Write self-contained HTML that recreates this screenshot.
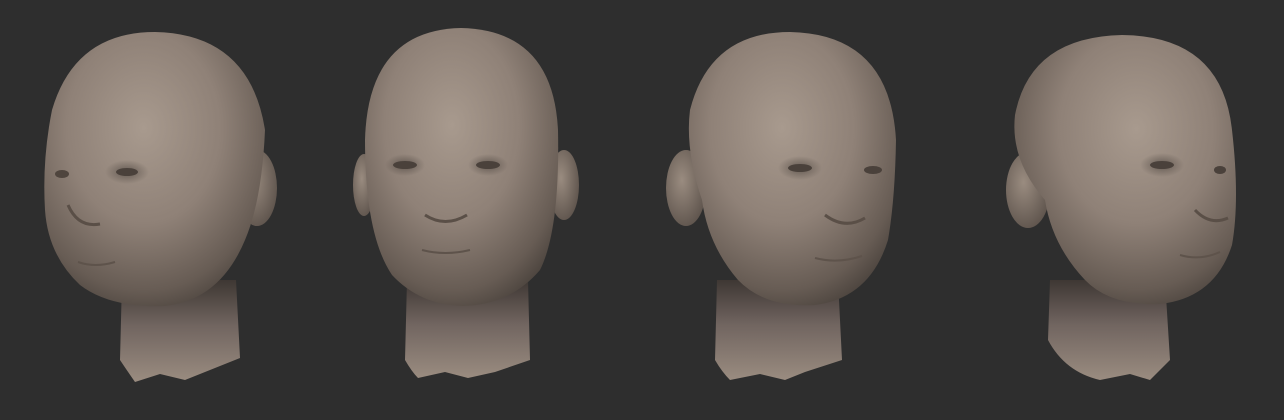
<!DOCTYPE html>
<html><head><meta charset="utf-8"><style>
html,body{margin:0;padding:0;background:#2e2e2e;width:1284px;height:420px;overflow:hidden}
svg{display:block}
</style></head><body>
<svg width="1284" height="420" viewBox="0 0 1284 420" xmlns="http://www.w3.org/2000/svg">
<defs>
<radialGradient id="h1" cx="0.45" cy="0.35" r="0.7">
<stop offset="0" stop-color="#a89a8e"/><stop offset="0.5" stop-color="#8f8177"/><stop offset="0.85" stop-color="#675c54"/><stop offset="1" stop-color="#4c443e"/>
</radialGradient>
<radialGradient id="h4" cx="0.55" cy="0.35" r="0.7">
<stop offset="0" stop-color="#a89a8e"/><stop offset="0.5" stop-color="#8f8177"/><stop offset="0.85" stop-color="#675c54"/><stop offset="1" stop-color="#4c443e"/>
</radialGradient>
<linearGradient id="nk" x1="0" y1="0" x2="0" y2="1">
<stop offset="0" stop-color="#3e3733"/><stop offset="0.45" stop-color="#716560"/><stop offset="1" stop-color="#9a8c80"/>
</linearGradient>
<radialGradient id="er" cx="0.4" cy="0.4" r="0.7">
<stop offset="0" stop-color="#9a8c80"/><stop offset="1" stop-color="#5a5049"/>
</radialGradient>
<radialGradient id="sh" cx="0.5" cy="0.5" r="0.5">
<stop offset="0" stop-color="#3f3833" stop-opacity="0.6"/><stop offset="1" stop-color="#3f3833" stop-opacity="0"/>
</radialGradient>
</defs>

<!-- Head 1 -->
<path d="M122 280 L120 360 Q128 372 135 382 L160 374 L185 380 L205 372 L240 358 L236 280 Z" fill="url(#nk)"/>
<ellipse cx="257" cy="188" rx="20" ry="38" fill="url(#er)"/>
<path d="M155 32 Q250 34 265 130 Q262 200 245 240 Q220 300 165 306 Q110 308 80 285 Q48 255 45 210 Q42 160 52 110 Q75 32 155 32 Z" fill="url(#h1)"/>
<ellipse cx="127" cy="172" rx="22" ry="12" fill="url(#sh)"/>
<ellipse cx="127" cy="172" rx="11" ry="4" fill="#4a413b"/>
<ellipse cx="62" cy="174" rx="7" ry="4" fill="#4f453e"/>
<path d="M68 205 Q78 228 100 224" stroke="#5a4f47" stroke-width="3" fill="none"/>
<path d="M78 262 Q95 268 115 262" stroke="#5e534b" stroke-width="2" fill="none"/>

<!-- Head 2 -->
<path d="M407 280 L405 360 Q412 372 418 378 L445 372 L468 378 L495 372 L530 360 L528 280 Z" fill="url(#nk)"/>
<ellipse cx="364" cy="185" rx="11" ry="31" fill="url(#er)"/>
<ellipse cx="564" cy="185" rx="15" ry="35" fill="url(#er)"/>
<path d="M461 28 Q553 30 558 130 Q560 230 540 270 Q510 305 463 306 Q420 305 392 275 Q365 235 365 140 Q368 30 461 28 Z" fill="url(#h1)"/>
<ellipse cx="405" cy="165" rx="20" ry="11" fill="url(#sh)"/>
<ellipse cx="488" cy="165" rx="20" ry="11" fill="url(#sh)"/>
<ellipse cx="405" cy="165" rx="12" ry="4" fill="#4a413b"/>
<ellipse cx="488" cy="165" rx="12" ry="4" fill="#4a413b"/>
<path d="M425 215 Q445 228 467 215" stroke="#5a4f47" stroke-width="3" fill="none"/>
<path d="M422 250 Q445 256 470 250" stroke="#5e534b" stroke-width="2" fill="none"/>

<!-- Head 3 -->
<path d="M717 280 L715 360 Q722 372 730 380 L760 374 L785 380 L805 372 L842 360 L838 280 Z" fill="url(#nk)"/>
<ellipse cx="686" cy="188" rx="20" ry="38" fill="url(#er)"/>
<path d="M790 32 Q890 34 896 140 Q895 200 888 240 Q870 298 815 305 Q765 308 738 280 Q708 245 702 200 Q685 150 690 110 Q710 32 790 32 Z" fill="url(#h1)"/>
<ellipse cx="800" cy="168" rx="22" ry="12" fill="url(#sh)"/>
<ellipse cx="800" cy="168" rx="12" ry="4" fill="#4a413b"/>
<ellipse cx="873" cy="170" rx="9" ry="4" fill="#4a413b"/>
<path d="M825 215 Q845 230 865 218" stroke="#5a4f47" stroke-width="3" fill="none"/>
<path d="M815 258 Q838 264 862 256" stroke="#5e534b" stroke-width="2" fill="none"/>

<!-- Head 4 -->
<path d="M1050 280 L1048 340 Q1065 372 1100 380 L1130 374 L1150 380 L1170 360 L1165 280 Z" fill="url(#nk)"/>
<ellipse cx="1028" cy="190" rx="22" ry="38" fill="url(#er)"/>
<path d="M1122 35 Q1222 36 1232 130 Q1240 200 1232 245 Q1215 298 1160 304 Q1110 306 1085 280 Q1052 245 1045 200 Q1010 160 1015 115 Q1030 37 1122 35 Z" fill="url(#h4)"/>
<ellipse cx="1162" cy="165" rx="22" ry="12" fill="url(#sh)"/>
<ellipse cx="1162" cy="165" rx="12" ry="4" fill="#4a413b"/>
<ellipse cx="1220" cy="170" rx="6" ry="4" fill="#4a413b"/>
<path d="M1195 210 Q1210 226 1228 218" stroke="#5a4f47" stroke-width="3" fill="none"/>
<path d="M1180 255 Q1200 261 1220 252" stroke="#5e534b" stroke-width="2" fill="none"/>
</svg>
</body></html>
